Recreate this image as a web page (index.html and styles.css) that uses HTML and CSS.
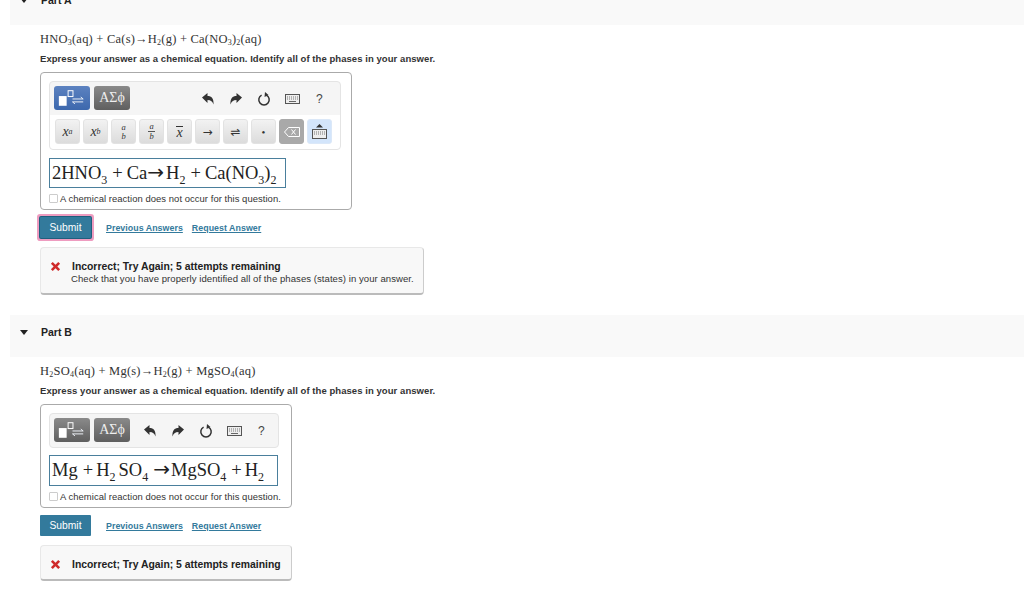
FILE: index.html
```html
<!DOCTYPE html>
<html lang="en">
<head>
<meta charset="utf-8">
<title>Chemical equations</title>
<link rel="stylesheet" href="styles.css">
</head>
<body>
<svg class="defs" width="0" height="0" aria-hidden="true">
  <symbol id="undo" viewBox="0 0 14 14"><path d="M1 5.500 6.500 1v3C10.500 4 13 6.500 12.500 12.500 11.500 9.500 10 8 6.500 8v3z" fill="#333"/></symbol>
  <symbol id="redo" viewBox="0 0 14 14"><path d="M13 5.500 7.500 1v3C3.500 4 1 6.500 1.500 12.500 2.500 9.500 4 8 7.500 8v3z" fill="#333"/></symbol>
  <symbol id="reset" viewBox="0 0 14 14"><path d="M4.600 3.100a5.200 5.200 0 1 0 4.800 0" fill="none" stroke="#333" stroke-width="1.500"/><path d="M8 0 11.500 3 7.500 5z" fill="#333"/></symbol>
  <symbol id="kbd" viewBox="0 0 15 10"><rect x=".5" y=".5" width="14" height="9" fill="#eee" stroke="#555"/><path d="M2 3h11M2 5h11" stroke="#777" stroke-dasharray="1 1"/><path d="M4 7.500h7" stroke="#666"/></symbol>
  <symbol id="template" viewBox="0 0 37 24"><rect x="5" y="10" width="8" height="10" fill="#fff"/><rect x="14.500" y="4.500" width="5" height="6" fill="none" stroke="#fff"/><path d="M19 13h11l-2.500-2M30 16H19l2.500 2" fill="none" stroke="#eef2f8"/></symbol>
  <symbol id="cross" viewBox="0 0 12 12"><path d="M1 3 3 1l3 3 3-3 2 2-3 3 3 3-2 2-3-3-3 3-2-2 3-3z" fill="#cf2a2a"/></symbol>
</svg>
<main class="page">

<section class="part">
  <header class="part-head"><span class="caret"></span><span class="part-title">Part A</span></header>
  <p class="equation">HNO<sub>3</sub>(aq) + Ca(s)→H<sub>2</sub>(g) + Ca(NO<sub>3</sub>)<sub>2</sub>(aq)</p>
  <p class="instruction">Express your answer as a chemical equation. Identify all of the phases in your answer.</p>
  <div class="editor editor-a">
    <div class="toolbar">
      <div class="tool-top">
        <div class="mode mode-on"><svg width="37" height="24"><use href="#template"/></svg></div>
        <div class="mode">ΑΣϕ</div>
        <div class="actions actions-a">
          <svg class="act" width="14" height="14"><use href="#undo"/></svg>
          <svg class="act" width="14" height="14"><use href="#redo"/></svg>
          <svg class="act" width="14" height="14"><use href="#reset"/></svg>
          <svg class="act" width="15" height="10"><use href="#kbd"/></svg>
          <span class="help">?</span>
        </div>
      </div>
      <div class="tool-bottom">
        <span class="key"><i>x</i><sup><i>a</i></sup></span>
        <span class="key"><i>x</i><sub><i>b</i></sub></span>
        <span class="key key-stack"><i>a</i><i>b</i></span>
        <span class="key key-stack key-frac"><i>a</i><i>b</i></span>
        <span class="key"><i class="over">x</i></span>
        <span class="key key-sym">→</span>
        <span class="key key-sym">⇌</span>
        <span class="key key-dot">•</span>
        <span class="key key-del"><svg width="16" height="10" viewBox="0 0 16 10"><path d="M4.500.5H15.500V9.500H4.500L.5 5z" fill="none" stroke="#fff"/><path d="M7.500 2.500l4 5M11.500 2.500l-4 5" stroke="#fff"/></svg></span>
        <span class="key key-kb"><svg width="15" height="15" viewBox="0 0 15 15"><path d="M7.500 0 11 3.500H4z" fill="#333"/><rect x=".5" y="5.500" width="14" height="9" fill="#eee" stroke="#555"/><path d="M2 8h11M2 10h11" stroke="#777" stroke-dasharray="1 1"/></svg></span>
      </div>
    </div>
    <div class="answer answer-a">2HNO<sub>3</sub><span class="op">+</span>Ca<span class="arrow">→</span>H<sub>2</sub><span class="op">+</span>Ca(NO<sub>3</sub>)<sub>2</sub></div>
    <label class="noreact"><span class="check"></span>A chemical reaction does not occur for this question.</label>
  </div>
  <div class="actions-row">
    <button class="submit submit-focus">Submit</button>
    <a class="link link-first">Previous Answers</a>
    <a class="link">Request Answer</a>
  </div>
  <div class="feedback feedback-a">
    <svg class="cross" width="11" height="11"><use href="#cross"/></svg>
    <div class="fb-text">
      <div class="fb-title">Incorrect; Try Again; 5 attempts remaining</div>
      <div class="fb-note">Check that you have properly identified all of the phases (states) in your answer.</div>
    </div>
  </div>
</section>

<section class="part part-b">
  <header class="part-head"><span class="caret"></span><span class="part-title">Part B</span></header>
  <p class="equation">H<sub>2</sub>SO<sub>4</sub>(aq) + Mg(s)→H<sub>2</sub>(g) + MgSO<sub>4</sub>(aq)</p>
  <p class="instruction">Express your answer as a chemical equation. Identify all of the phases in your answer.</p>
  <div class="editor editor-b">
    <div class="toolbar toolbar-b">
      <div class="tool-top">
        <div class="mode"><svg width="37" height="24"><use href="#template"/></svg></div>
        <div class="mode">ΑΣϕ</div>
        <div class="actions actions-b">
          <svg class="act" width="14" height="14"><use href="#undo"/></svg>
          <svg class="act" width="14" height="14"><use href="#redo"/></svg>
          <svg class="act" width="14" height="14"><use href="#reset"/></svg>
          <svg class="act" width="15" height="10"><use href="#kbd"/></svg>
          <span class="help">?</span>
        </div>
      </div>
    </div>
    <div class="answer answer-b">Mg<span class="op op-mg">+</span>H<sub>2</sub><span class="gap"></span>SO<sub>4</sub><span class="arrow arrow-b">→</span>MgSO<sub>4</sub><span class="op op-b">+</span>H<sub>2</sub></div>
    <label class="noreact"><span class="check"></span>A chemical reaction does not occur for this question.</label>
  </div>
  <div class="actions-row">
    <button class="submit">Submit</button>
    <a class="link link-first">Previous Answers</a>
    <a class="link">Request Answer</a>
  </div>
  <div class="feedback feedback-b">
    <svg class="cross" width="11" height="11"><use href="#cross"/></svg>
    <div class="fb-text">
      <div class="fb-title">Incorrect; Try Again; 5 attempts remaining</div>
    </div>
  </div>
</section>

</main>
</body>
</html>
```
FILE: styles.css
```css
html, body { margin: 0; padding: 0; background: #fff; }
body { width: 1024px; height: 596px; overflow: hidden; font-family: "Liberation Sans", Arial, sans-serif; color: #222; }
.defs { display: block; height: 0; }
.page { margin-top: -17px; }

.part { padding-bottom: 20px; }
.part-b { padding-bottom: 0; }
.part-head { margin-left: 10px; height: 42px; box-sizing: border-box; padding-top: 11px; background: #f9f9f9; display: flex; align-items: flex-start; }
.caret { width: 0; height: 0; margin: 4px 0 0 10px; border: 4px solid transparent; border-top: 5px solid #222; border-bottom: 0; }
.part-title { margin-left: 13px; font-size: 10.500px; line-height: 12px; font-weight: 700; }

.equation { margin: 7px 0 0 40px; height: 15px; line-height: 15px; font-family: "Liberation Serif", serif; font-size: 12.500px; letter-spacing: .22px; color: #333; white-space: nowrap; }
.equation sub { font-size: 8px; line-height: 0; vertical-align: -2px; }
.instruction { margin: 5px 0 0 40px; height: 14px; line-height: 14px; font-size: 9.500px; font-weight: 700; letter-spacing: .06px; color: #333; white-space: nowrap; }

.editor { margin: 6px 0 0 40px; border: 1px solid #aaa; border-radius: 4px; box-sizing: border-box; padding: 8px 0 0 8px; background: #fff; }
.editor-a { width: 312px; height: 138px; }
.editor-b { width: 252px; height: 104px; }

.toolbar { width: 292px; border: 1px solid #e4e4e4; border-radius: 4px; box-sizing: border-box; background: #f5f5f5; }
.toolbar-b { width: 230px; }
.tool-top { height: 33px; box-sizing: border-box; padding: 4px 0 0 4px; display: flex; align-items: flex-start; gap: 4px; }
.tool-bottom { height: 34px; box-sizing: border-box; padding: 4px 0 0 5px; display: flex; align-items: flex-start; gap: 3px; background: #fff; border-radius: 0 0 4px 4px; }

.mode { width: 36px; height: 24px; border-radius: 3px; background: linear-gradient(#8a8a8a, #5f5f5f); color: #eee; font-family: "Liberation Serif", serif; font-size: 14px; display: flex; align-items: center; justify-content: center; }
.mode-on { background: linear-gradient(#5c82c0, #3d68ad); }

.actions { display: flex; align-items: center; height: 26px; }
.actions-a { margin-left: 67px; gap: 14px; }
.actions-b { margin-left: 9px; gap: 14px; }
.help { font-size: 12px; color: #444; margin-left: 2px; }

.key { width: 25px; height: 25px; box-sizing: border-box; border: 1px solid #e2e2e2; border-radius: 3px; background: linear-gradient(#f2f2f2, #dcdcdc); display: flex; align-items: center; justify-content: center; font-family: "Liberation Serif", serif; font-size: 14px; color: #333; }
.key sup, .key sub { font-size: 8px; line-height: 0; }
.key-stack { flex-direction: column; font-size: 8.500px; line-height: 9px; }
.key-frac i:first-child { border-bottom: 1px solid #555; padding: 0 1px; }
.over { border-top: 1px solid #333; line-height: 11px; }
.key-sym { font-family: "DejaVu Sans", sans-serif; font-size: 12px; }
.key-dot { font-size: 11px; }
.key-del { background: #a9a9a9; border-color: #a9a9a9; }
.key-kb { background: #d3e5fb; border-color: #dbe8f8; }

.answer { margin: 8px 0 0 0; height: 30px; box-sizing: border-box; border: 1px solid #4a7f9c; font-family: "Liberation Serif", serif; font-size: 18.500px; line-height: 28px; color: #222; padding-left: 2px; white-space: nowrap; }
.answer sub { font-size: 12px; line-height: 0; vertical-align: -5px; }
.answer-a { width: 237px; }
.answer-b { width: 229px; height: 31px; margin-top: 7px; }
.op { margin: 0 4px 0 5px; }
.op-mg { margin: 0 3px 0 5px; }
.op-b { margin: 0 3px 0 5px; }
.arrow { font-family: "DejaVu Sans", sans-serif; font-size: 20px; line-height: 0; margin: 0 3px 0 0; letter-spacing: -1px; }
.arrow-b { margin-left: 5px; margin-right: 2px; }
.gap { display: inline-block; width: 3px; }

.noreact { margin-top: 5px; display: flex; align-items: center; font-size: 9.450px; letter-spacing: .05px; color: #333; white-space: nowrap; height: 10px; }
.check { width: 7px; height: 7px; border: 1px solid #ccc; border-radius: 1px; margin-right: 2px; flex: none; }

.actions-row { margin: 7px 0 0 40px; height: 21px; display: flex; align-items: center; }
.submit { width: 51px; height: 21px; padding: 0; border: 0; border-radius: 1px; background: #337a9c; color: #fff; font-family: "Liberation Sans", Arial, sans-serif; font-size: 10.300px; }
.submit-focus { box-shadow: 0 0 0 1px #1f5f7d, 0 0 0 3px #ee9cc0; }
.link { margin-left: 9px; font-size: 8.850px; font-weight: 700; letter-spacing: .03px; color: #337a9c; text-decoration: underline; white-space: nowrap; }
.link-first { margin-left: 15px; }

.feedback { margin: 9px 0 0 40px; box-sizing: border-box; border: 1px solid #e8e8e8; border-bottom: 2px solid #bbb; border-right-color: #ccc; border-radius: 4px; background: #f8f8f8; display: flex; align-items: flex-start; padding: 13px 0 0 9px; }
.feedback-a { width: 384px; height: 48px; }
.feedback-b { width: 252px; height: 36px; }
.cross { flex: none; margin-right: 11px; }
.fb-title { font-size: 10.400px; line-height: 12px; font-weight: 700; color: #222; white-space: nowrap; }
.fb-note { font-size: 9.550px; line-height: 12px; color: #333; white-space: nowrap; margin-left: -1px; letter-spacing: .05px; }
```
